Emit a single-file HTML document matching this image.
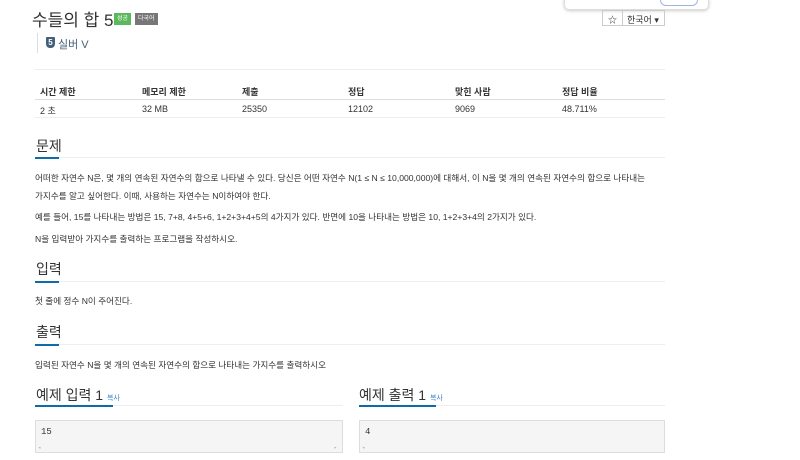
<!DOCTYPE html>
<html><head><meta charset="utf-8"><style>
*{margin:0;padding:0;box-sizing:border-box}
body{width:800px;height:460px;overflow:hidden;background:#fff;font-family:"Liberation Sans","Noto Sans CJK KR",sans-serif;color:#333;position:relative}
.a{position:absolute;white-space:nowrap}
.t{font-size:9px}
.p{font-size:8.6px}
.h{font-size:14px;color:#333}
.ul{position:absolute;height:2px;background:#0f6aa8}
.ln{position:absolute;height:1px;background:#eee}
.badge{position:absolute;top:13px;height:12px;font-size:6px;color:#fff;line-height:12px;padding:0 3px}
.pre{position:absolute;top:420px;height:33px;background:#f5f5f5;border:1px solid #ddd;font-family:"Liberation Mono",monospace;font-size:9px;padding:6px 5px}
</style></head><body>
<div style="position:absolute;left:564px;top:-6px;width:145px;height:16px;border:1px solid #ddd;border-radius:5px;box-shadow:0 1px 3px rgba(0,0,0,.2);background:#fff"></div>
<div style="position:absolute;left:660px;top:-6px;width:38px;height:12px;border:1px solid #9bb7e0;border-radius:6px"></div>
<div class="a" style="left:32px;top:6px;font-size:17px;color:#333">수들의 합 5</div>
<div class="badge" style="left:114px;background:#5cb85c">성공</div>
<div class="badge" style="left:135px;background:#777">다국어</div>
<div style="position:absolute;left:37px;top:33px;width:1px;height:20px;background:#ddd"></div>
<div style="position:absolute;left:46px;top:37px;width:9px;height:11px;background:#435f7a;border-radius:1px 1px 4px 4px;color:#fff;font-size:8px;font-weight:bold;text-align:center;line-height:11px">5</div>
<div class="a" style="left:58px;top:36px;font-size:11px;color:#435f7a">실버 V</div>
<div style="position:absolute;left:602px;top:10px;width:63px;height:16px;border:1px solid #ccc;font-size:9px"><span class="a" style="left:5px;top:2px">☆</span><div style="position:absolute;left:19px;top:0;width:1px;height:14px;background:#ccc"></div><span class="a" style="left:24px;top:2px">한국어 ▾</span></div>
<div class="ln" style="left:35px;top:69px;width:630px"></div>
<div class="a t" style="left:40px;top:85px;font-weight:bold">시간 제한</div>
<div class="a t" style="left:142px;top:85px;font-weight:bold">메모리 제한</div>
<div class="a t" style="left:242px;top:85px;font-weight:bold">제출</div>
<div class="a t" style="left:348px;top:85px;font-weight:bold">정답</div>
<div class="a t" style="left:455px;top:85px;font-weight:bold">맞힌 사람</div>
<div class="a t" style="left:562px;top:85px;font-weight:bold">정답 비율</div>
<div class="ln" style="left:35px;top:99px;width:630px;background:#ddd"></div>
<div class="a t" style="left:40px;top:104px">2 초</div>
<div class="a t" style="left:142px;top:104px">32 MB</div>
<div class="a t" style="left:242px;top:104px">25350</div>
<div class="a t" style="left:348px;top:104px">12102</div>
<div class="a t" style="left:455px;top:104px">9069</div>
<div class="a t" style="left:562px;top:104px">48.711%</div>
<div class="ln" style="left:35px;top:117px;width:630px"></div>
<div class="a h" style="left:36px;top:136px">문제</div>
<div class="ln" style="left:35px;top:157px;width:630px"></div><div class="ul" style="left:35px;top:157px;width:24px"></div>
<div class="a p" style="left:35px;top:172px">어떠한 자연수 N은, 몇 개의 연속된 자연수의 합으로 나타낼 수 있다. 당신은 어떤 자연수 N(1 ≤ N ≤ 10,000,000)에 대해서, 이 N을 몇 개의 연속된 자연수의 합으로 나타내는</div>
<div class="a p" style="left:35px;top:190px">가지수를 알고 싶어한다. 이때, 사용하는 자연수는 N이하여야 한다.</div>
<div class="a p" style="left:35px;top:211px">예를 들어, 15를 나타내는 방법은 15, 7+8, 4+5+6, 1+2+3+4+5의 4가지가 있다. 반면에 10을 나타내는 방법은 10, 1+2+3+4의 2가지가 있다.</div>
<div class="a p" style="left:35px;top:233px">N을 입력받아 가지수를 출력하는 프로그램을 작성하시오.</div>
<div class="a h" style="left:36px;top:259px">입력</div>
<div class="ln" style="left:35px;top:281px;width:630px"></div><div class="ul" style="left:35px;top:281px;width:24px"></div>
<div class="a p" style="left:35px;top:295px">첫 줄에 정수 N이 주어진다.</div>
<div class="a h" style="left:36px;top:322px">출력</div>
<div class="ln" style="left:35px;top:344px;width:630px"></div><div class="ul" style="left:35px;top:344px;width:24px"></div>
<div class="a p" style="left:35px;top:359px">입력된 자연수 N을 몇 개의 연속된 자연수의 합으로 나타내는 가지수를 출력하시오</div>
<div class="a h" style="left:36px;top:385px">예제 입력 1 <span style="font-size:7px;color:#428bca">복사</span></div>
<div class="ln" style="left:35px;top:405px;width:308px"></div><div class="ul" style="left:35px;top:405px;width:78px"></div>
<div class="a h" style="left:359px;top:385px">예제 출력 1 <span style="font-size:7px;color:#428bca">복사</span></div>
<div class="ln" style="left:359px;top:405px;width:306px"></div><div class="ul" style="left:359px;top:405px;width:77px"></div>
<div class="pre" style="left:35px;width:308px">15<span class="a" style="left:2px;top:24px;font-size:5px;color:#aaa">◂</span><span class="a" style="left:298px;top:24px;font-size:5px;color:#aaa">▸</span></div>
<div class="pre" style="left:359px;width:306px">4<span class="a" style="left:2px;top:24px;font-size:5px;color:#aaa">◂</span></div>
</body></html>
